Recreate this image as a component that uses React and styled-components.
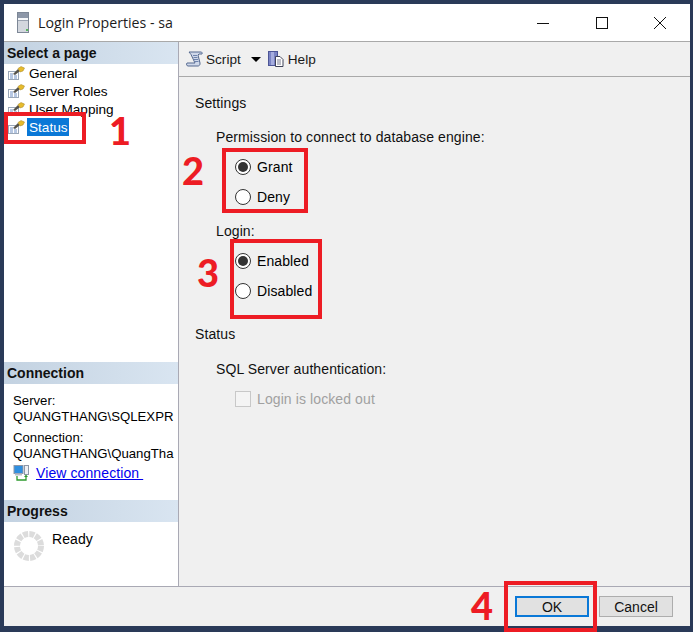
import React from "react";
import styled, { createGlobalStyle } from "styled-components";

const GlobalStyle = createGlobalStyle`
  html, body { margin: 0; padding: 0; background: #2b3a55; }
  body { font-family: "Liberation Sans", Arial, sans-serif; font-size: 14px; letter-spacing: 0.1px; color: #000; }
`;

const Frame = styled.div`
  position: relative;
  box-sizing: border-box;
  width: 693px;
  height: 632px;
  padding: 4px 3px 6px 4px;
  background: #2a3a58;
`;

const Dialog = styled.div`
  display: flex;
  flex-direction: column;
  height: 100%;
  background: #f0f0f0;
`;

const TitleBar = styled.div`
  display: flex;
  align-items: center;
  flex: 0 0 37px;
  padding-left: 12px;
  background: #fff;
  border-bottom: 1px solid #a9a9a9;
`;

const Title = styled.span`
  margin-left: 8px;
  font-family: "Open Sans", sans-serif;
  font-size: 14.2px;
  letter-spacing: 0;
  color: #1c1c1c;
`;

const WindowButtons = styled.div`
  display: flex;
  align-items: center;
  gap: 44.5px;
  margin-left: auto;
  margin-right: 23px;
`;

const Main = styled.div`
  display: flex;
  flex: 1;
  min-height: 0;
`;

const Sidebar = styled.div`
  display: flex;
  flex-direction: column;
  width: 174px;
  background: #fff;
  border-right: 1px solid #a9a9b4;
`;

const SectionHead = styled.div`
  display: flex;
  align-items: center;
  height: 22px;
  padding-left: 3px;
  font-weight: bold;
  font-size: 14px;
  letter-spacing: 0;
  color: #111;
  background: linear-gradient(to right, #c3d2e1, #d9e5f1);
`;

const PageList = styled.div`
  display: flex;
  flex-direction: column;
  flex: 0 0 298px;
`;

const PageRow = styled.div`
  display: flex;
  align-items: center;
  height: 18px;
  padding-left: 4px;
  gap: 2px;
`;

const PageLabel = styled.span`
  padding: 1px 1px 0 2px;
  font-size: 13.6px;
  letter-spacing: 0;
  line-height: 17px;
  background: ${(p) => (p.$active ? "#0a78d7" : "transparent")};
  color: ${(p) => (p.$active ? "#fff" : "#000")};
`;

const ConnectionBody = styled.div`
  box-sizing: border-box;
  display: flex;
  flex-direction: column;
  flex: 0 0 116px;
  padding: 9px 0 0 9px;
  overflow: hidden;
`;

const ConnLine = styled.div`
  font-size: 13.2px;
  letter-spacing: 0;
  line-height: 16px;
  white-space: nowrap;
  margin-top: ${(p) => (p.$gap ? "5px" : "0")};
`;

const ConnLink = styled.div`
  display: flex;
  align-items: center;
  gap: 7px;
  margin-top: 2px;
  height: 18px;
`;

const LinkText = styled.a`
  color: #0000ee;
  text-decoration: underline;
  white-space: pre;
`;

const ProgressBody = styled.div`
  display: flex;
  flex: 1;
  padding: 9px 0 0 10px;
  gap: 8px;
`;

const Content = styled.div`
  display: flex;
  flex-direction: column;
  flex: 1;
`;

const Toolbar = styled.div`
  display: flex;
  align-items: center;
  flex: 0 0 35px;
  padding-left: 7px;
  border-bottom: 1px solid #a9a9a9;
  box-sizing: border-box;
  background: #f0f0f0;
  color: #1a1a1a;
  font-size: 13.6px;
  letter-spacing: 0;
`;

const ToolLabel = styled.span`
  margin-left: ${(p) => p.$left || 3}px;
`;

const Caret = styled.span`
  width: 0;
  height: 0;
  margin: 0 7px 0 10px;
  border-left: 5px solid transparent;
  border-right: 5px solid transparent;
  border-top: 5px solid #000;
`;

const Form = styled.div`
  display: flex;
  flex-direction: column;
  padding: 18px 0 0 16px;
`;

const Heading = styled.div`
  line-height: 16px;
  margin-top: ${(p) => p.$top || 0}px;
  color: #111;
`;

const Indented = styled.div`
  display: flex;
  flex-direction: column;
  margin-left: 21px;
`;

const RadioRow = styled.div`
  display: flex;
  align-items: center;
  height: 16px;
  gap: 6px;
  margin-top: ${(p) => p.$top || 0}px;
  margin-left: 19px;
`;

const Radio = styled.span`
  box-sizing: border-box;
  display: inline-flex;
  align-items: center;
  justify-content: center;
  width: 16px;
  height: 16px;
  border-radius: 50%;
  border: 1px solid #333;
  background: #fff;
  &::after {
    content: "";
    display: ${(p) => (p.$on ? "block" : "none")};
    width: 10px;
    height: 10px;
    border-radius: 50%;
    background: #333;
  }
`;

const CheckRow = styled.div`
  display: flex;
  align-items: center;
  gap: 6px;
  height: 16px;
  margin: 14px 0 0 19px;
  color: #a0a0a0;
`;

const CheckBox = styled.span`
  box-sizing: border-box;
  width: 16px;
  height: 16px;
  border: 1px solid #c8c8c8;
  background: #f4f4f4;
`;

const Footer = styled.div`
  display: flex;
  align-items: center;
  justify-content: flex-end;
  gap: 10px;
  flex: 0 0 40px;
  box-sizing: border-box;
  padding: 0 17px 0 0;
  border-top: 1px solid #a9a9b4;
`;

const Button = styled.button`
  box-sizing: border-box;
  width: 74px;
  height: 21px;
  padding: 0;
  font: 14px "Liberation Sans", Arial, sans-serif;
  color: #111;
  background: #e1e1e1;
  border: ${(p) => (p.$primary ? "2px solid #0a78d7" : "1px solid #adadad")};
`;

const RedBox = styled.div`
  position: absolute;
  box-sizing: border-box;
  left: ${(p) => p.$x}px;
  top: ${(p) => p.$y}px;
  width: ${(p) => p.$w}px;
  height: ${(p) => p.$h}px;
  border: 4px solid #ed1c24;
`;

const RedNumber = styled.span`
  position: absolute;
  left: ${(p) => p.$x}px;
  top: ${(p) => p.$y}px;
  font-family: "Lato", sans-serif;
  font-weight: 900;
  font-size: 38px;
  line-height: 40px;
  letter-spacing: 0;
  color: #ed1c24;
`;

const ServerIcon = () => (
  <svg width="14" height="21" viewBox="0 0 14 21">
    <rect x="1.500" y="0.500" width="11" height="20" fill="#eef0f3" stroke="#7d8796" />
    <rect x="2" y="1" width="10" height="5" fill="#8d97a8" />
    <rect x="2" y="6" width="10" height="2" fill="#f7f8fa" />
    <rect x="2" y="8" width="10" height="1" fill="#9aa3b1" />
    <rect x="2" y="9" width="10" height="11" fill="#d3d7de" />
    <rect x="10" y="17" width="2" height="2" fill="#58b85e" />
  </svg>
);

const PageIcon = () => (
  <svg width="17" height="15" viewBox="0 0 17 15">
    <rect x="0.500" y="5.500" width="10" height="8" fill="#fff" stroke="#9aa7b8" />
    <path d="M2 8h3M2 10h3M2 12h3M6 10h3M6 12h3" stroke="#6f8fc4" />
    <path d="M5 8 L10 3 L12 5 L7 9 Z" fill="#55524a" />
    <path d="M10 2.500 L13 0.500 L16.500 2 L15 5 L12 6 Z" fill="#e6bb2c" stroke="#a58322" strokeWidth="0.500" />
  </svg>
);

const ScriptIcon = () => (
  <svg width="17" height="17" viewBox="0 0 17 17">
    <path d="M3 1h12c1 0 1.500 1 1 2h-3l-1 1 2 8c.3 2-1 3-2 3H2c-1.300 0-2-2-1-3h8L5 3.500C4.500 2.500 3.500 2 3 1z" fill="#cfd8ea" stroke="#55698f" />
    <path d="M7 4.500h4M7.500 6.500h4M8 8.500h4M8.500 10.500h4" stroke="#6f84ad" />
  </svg>
);

const HelpIcon = () => (
  <svg width="16" height="16" viewBox="0 0 16 16">
    <rect x="0.500" y="0.500" width="9" height="14" fill="#7a83c4" stroke="#4c5596" />
    <rect x="3" y="1" width="3" height="13" fill="#a6adde" />
    <path d="M7.500 5.500h4.500l3 3v7h-7.500z" fill="#fff" stroke="#3f4258" />
    <path d="M9 9h4M9 11h4M9 13h4" stroke="#7d7f90" />
  </svg>
);

const ConnIcon = () => (
  <svg width="16" height="16" viewBox="0 0 16 16">
    <rect x="1" y="0.500" width="9" height="8" fill="#2f8fe0" stroke="#8d97a8" />
    <rect x="2" y="8.500" width="7" height="2" fill="#b8bec9" />
    <rect x="11.500" y="0.500" width="4" height="9" fill="#eef0f5" stroke="#8d97a8" />
    <path d="M4 11v4h9v-4" fill="none" stroke="#2e9a2e" strokeWidth="1.300" />
    <path d="M11 12l2-2.500 2 2.500z" fill="#2e9a2e" />
  </svg>
);

const Spinner = () => (
  <svg width="30" height="30" viewBox="0 0 30 30">
    <circle cx="15" cy="15" r="12" fill="none" stroke="#dcdcdc" strokeWidth="6" strokeDasharray="5.100 1.180" />
  </svg>
);

const pages = ["General", "Server Roles", "User Mapping", "Status"];

export default function App() {
  return (
    <>
      <GlobalStyle />
      <Frame>
        <Dialog>
          <TitleBar>
            <ServerIcon />
            <Title>Login Properties - sa</Title>
            <WindowButtons>
              <svg width="14" height="14" viewBox="0 0 14 14">
                <path d="M1 7.500h12" stroke="#111" />
              </svg>
              <svg width="14" height="14" viewBox="0 0 14 14">
                <rect x="1.500" y="1.500" width="11" height="11" fill="none" stroke="#111" />
              </svg>
              <svg width="14" height="14" viewBox="0 0 14 14">
                <path d="M1 1l12 12M13 1L1 13" stroke="#111" />
              </svg>
            </WindowButtons>
          </TitleBar>
          <Main>
            <Sidebar>
              <SectionHead>Select a page</SectionHead>
              <PageList>
                {pages.map((name) => (
                  <PageRow key={name}>
                    <PageIcon />
                    <PageLabel $active={name === "Status"}>{name}</PageLabel>
                  </PageRow>
                ))}
              </PageList>
              <SectionHead>Connection</SectionHead>
              <ConnectionBody>
                <ConnLine>Server:</ConnLine>
                <ConnLine>QUANGTHANG\SQLEXPR</ConnLine>
                <ConnLine $gap>Connection:</ConnLine>
                <ConnLine>QUANGTHANG\QuangTha</ConnLine>
                <ConnLink>
                  <ConnIcon />
                  <LinkText>View connection </LinkText>
                </ConnLink>
              </ConnectionBody>
              <SectionHead>Progress</SectionHead>
              <ProgressBody>
                <Spinner />
                <span>Ready</span>
              </ProgressBody>
            </Sidebar>
            <Content>
              <Toolbar>
                <ScriptIcon />
                <ToolLabel>Script</ToolLabel>
                <Caret />
                <HelpIcon />
                <ToolLabel $left={4}>Help</ToolLabel>
              </Toolbar>
              <Form>
                <Heading>Settings</Heading>
                <Indented>
                  <Heading $top={18}>Permission to connect to database engine:</Heading>
                </Indented>
                <Indented>
                  <RadioRow $top={14}>
                    <Radio $on />
                    Grant
                  </RadioRow>
                  <RadioRow $top={14}>
                    <Radio />
                    Deny
                  </RadioRow>
                  <Heading $top={18}>Login:</Heading>
                  <RadioRow $top={14}>
                    <Radio $on />
                    Enabled
                  </RadioRow>
                  <RadioRow $top={14}>
                    <Radio />
                    Disabled
                  </RadioRow>
                </Indented>
                <Heading $top={27}>Status</Heading>
                <Indented>
                  <Heading $top={19}>SQL Server authentication:</Heading>
                  <CheckRow>
                    <CheckBox />
                    Login is locked out
                  </CheckRow>
                </Indented>
              </Form>
            </Content>
          </Main>
          <Footer>
            <Button $primary>OK</Button>
            <Button>Cancel</Button>
          </Footer>
        </Dialog>
        <RedBox $x={4} $y={112} $w={82} $h={32} />
        <RedBox $x={222} $y={148} $w={86} $h={65} />
        <RedBox $x={230} $y={239} $w={92} $h={80} />
        <RedBox $x={504} $y={581} $w={93} $h={51} />
        <RedNumber $x={109} $y={110}>1</RedNumber>
        <RedNumber $x={182} $y={150}>2</RedNumber>
        <RedNumber $x={197} $y={252}>3</RedNumber>
        <RedNumber $x={471} $y={585}>4</RedNumber>
      </Frame>
    </>
  );
}
